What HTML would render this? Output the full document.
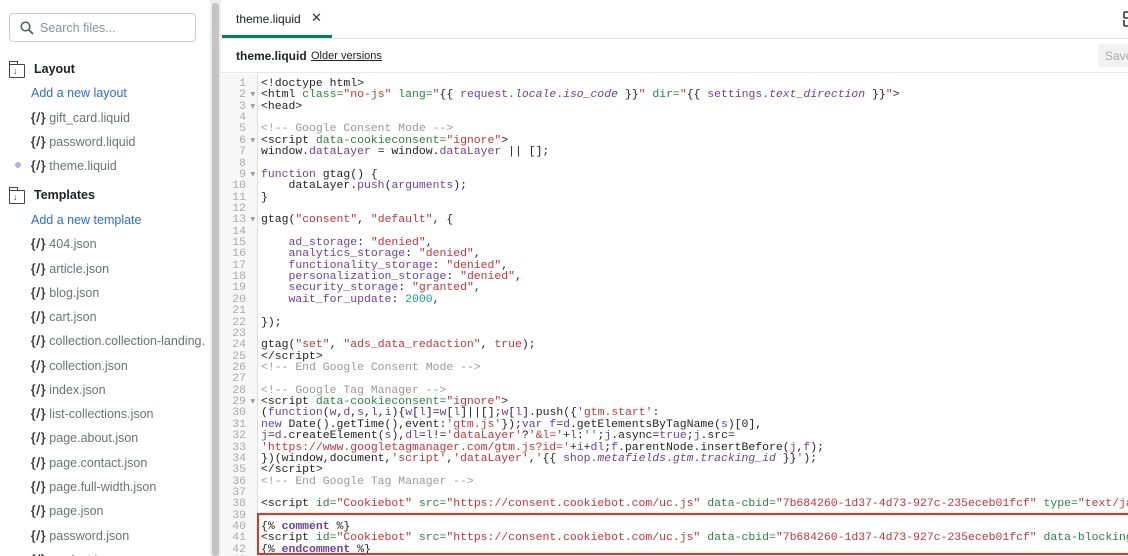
<!DOCTYPE html>
<html><head><meta charset="utf-8">
<style>
*{box-sizing:border-box;margin:0;padding:0}
html,body{width:1128px;height:556px;overflow:hidden}
body{background:#fff;font-family:"Liberation Sans",sans-serif;position:relative}
.side{position:absolute;left:0;top:0;width:210px;height:556px;background:#fff;overflow:hidden}
.search{position:absolute;left:9px;top:13px;width:187px;height:29px;border:1px solid #c9cccf;border-radius:4px}
.search span{position:absolute;left:30px;top:7px;font-size:12.5px;color:#8c9196}
.search svg{position:absolute;left:10px;top:7px}
.it{position:absolute;font-size:12.5px;color:#6d7175;left:31px;white-space:nowrap}
.it b{font-weight:normal;color:#333;font-size:13px;letter-spacing:1px;margin-right:3px;-webkit-text-stroke:0.4px #333}
.add{position:absolute;left:31px;font-size:12.5px;color:#2c6ecb}
.hd{position:absolute;left:34px;font-size:12.5px;font-weight:bold;color:#202223}
.fold{position:absolute;left:9px;width:16px;height:14px;border:1.5px solid #444;border-radius:1px}
.fold:before{content:"";position:absolute;left:-1.5px;top:-4px;width:7px;height:3px;border:1.5px solid #444;border-bottom:none}
.fold i{position:absolute;left:3px;top:1px;font-style:normal;font-size:9px;line-height:10px;color:#444}
.dot{position:absolute;left:15px;top:162px;width:6px;height:6px;border-radius:50%;background:#aeb4e6}
.track{position:absolute;left:210px;top:0;width:11px;height:556px;background:#ededed}
.thumb{position:absolute;left:212px;top:3px;width:7px;height:553px;background:#c4c4c4;border-radius:3px}
.main{position:absolute;left:221px;top:0;width:907px;height:556px;background:#fff;overflow:hidden}
.tab{position:absolute;left:15px;top:12px;font-size:12px;color:#202223}
.tabx{position:absolute;left:90px;top:10px;font-size:13px;color:#333}
.green{position:absolute;left:1px;top:35px;width:110px;height:3px;background:#008060}
.tline{position:absolute;left:0;top:38px;right:0;height:1px;background:#e1e3e5}
.ttl{position:absolute;left:15px;top:49px;font-size:12px;font-weight:bold;color:#202223}
.older{position:absolute;left:90px;top:50px;font-size:11px;color:#202223;text-decoration:underline}
.save{position:absolute;left:877px;top:44px;width:40px;height:23px;background:#f1f1f1;border-radius:3px;font-size:12px;color:#aaa;padding:5px 0 0 7px}
.hline{position:absolute;left:0;top:72px;right:0;height:1px;background:#e8e8e8}
.gut{position:absolute;left:1px;top:74px;width:36px;height:482px;background:#f7f7f7;border-right:1px solid #ddd}
.code{position:absolute;left:0;top:78px;font-family:"Liberation Mono",monospace;font-size:11.45px;color:#222;white-space:normal}
.code div{height:11.37px;line-height:11.37px;white-space:pre}
.ln{display:inline-block;width:25px;text-align:right;color:#aaa}
.ar{display:inline-block;width:15px;color:#999;text-align:left;padding-left:3px;transform:scale(0.7)}
.g{color:#2e7d46}.s{color:#c8323a}.p{color:#6b3fa0}.c{color:#999}.n{color:#1a9a9a}.i{font-style:italic}
.red{position:absolute;left:36px;top:513px;width:900px;height:42px;border:2.5px solid #e8321e;border-right:none}
</style></head><body>
<div class="side">
<div class="search"><svg width="14" height="14" viewBox="0 0 14 14"><circle cx="5.5" cy="5.5" r="4.3" fill="none" stroke="#5c5f62" stroke-width="1.6"/><line x1="8.7" y1="8.7" x2="13" y2="13" stroke="#5c5f62" stroke-width="1.8"/></svg><span>Search files...</span></div>
<div class="fold" style="top:64px"><i>↓</i></div><div class="hd" style="top:62px">Layout</div>
<div class="add" style="top:86px">Add a new layout</div>
<div class="it" style="top:110px"><b>{/}</b>gift_card.liquid</div>
<div class="it" style="top:134px"><b>{/}</b>password.liquid</div>
<div class="dot"></div>
<div class="it" style="top:158px"><b>{/}</b>theme.liquid</div>
<div class="fold" style="top:190px"><i>↓</i></div><div class="hd" style="top:188px">Templates</div>
<div class="add" style="top:213px">Add a new template</div>
<div class="it" style="top:236px"><b>{/}</b>404.json</div>
<div class="it" style="top:261px"><b>{/}</b>article.json</div>
<div class="it" style="top:285px"><b>{/}</b>blog.json</div>
<div class="it" style="top:309px"><b>{/}</b>cart.json</div>
<div class="it" style="top:333px"><b>{/}</b>collection.collection-landing.</div>
<div class="it" style="top:358px"><b>{/}</b>collection.json</div>
<div class="it" style="top:382px"><b>{/}</b>index.json</div>
<div class="it" style="top:406px"><b>{/}</b>list-collections.json</div>
<div class="it" style="top:430px"><b>{/}</b>page.about.json</div>
<div class="it" style="top:455px"><b>{/}</b>page.contact.json</div>
<div class="it" style="top:479px"><b>{/}</b>page.full-width.json</div>
<div class="it" style="top:503px"><b>{/}</b>page.json</div>
<div class="it" style="top:528px"><b>{/}</b>password.json</div>
<div class="it" style="top:552px"><b>{/}</b>product.json</div>
</div>
<div class="track"></div><div class="thumb"></div>
<div class="main">
<div class="tab">theme.liquid</div><div class="tabx">✕</div>
<svg style="position:absolute;left:902px;top:11px" width="10" height="16" viewBox="0 0 10 16"><path d="M1 1h9M1 1v6M1 7h9M1 9v6M1 15h9" stroke="#333" stroke-width="1.6" fill="none"/></svg>
<div class="green"></div><div class="tline"></div>
<div class="ttl">theme.liquid</div><div class="older">Older versions</div>
<div class="save">Save</div>
<div class="hline"></div>
<div class="gut"></div>
<div class="code"><div><span class="ln">1</span><span class="ar"> </span>&lt;!doctype html&gt;</div><div><span class="ln">2</span><span class="ar">▼</span>&lt;html <span class="g">class=</span><span class="s">"no-js"</span> <span class="g">lang=</span><span class="s">"</span>{{ <span class="p">request.<i>locale</i>.<i>iso_code</i></span> }}<span class="s">"</span> <span class="g">dir=</span><span class="s">"</span>{{ <span class="p">settings.<i>text_direction</i></span> }}<span class="s">"</span>&gt;</div><div><span class="ln">3</span><span class="ar">▼</span>&lt;head&gt;</div><div><span class="ln">4</span><span class="ar"> </span></div><div><span class="ln">5</span><span class="ar"> </span><span class="c">&lt;!-- Google Consent Mode --&gt;</span></div><div><span class="ln">6</span><span class="ar">▼</span>&lt;script <span class="g">data-cookieconsent=</span><span class="s">"ignore"</span>&gt;</div><div><span class="ln">7</span><span class="ar"> </span>window.<span class="p">dataLayer</span> = window.<span class="p">dataLayer</span> || [];</div><div><span class="ln">8</span><span class="ar"> </span></div><div><span class="ln">9</span><span class="ar">▼</span><span class="p">function</span> gtag() {</div><div><span class="ln">10</span><span class="ar"> </span>    dataLayer.<span class="p">push</span>(<span class="p">arguments</span>);</div><div><span class="ln">11</span><span class="ar"> </span>}</div><div><span class="ln">12</span><span class="ar"> </span></div><div><span class="ln">13</span><span class="ar">▼</span>gtag(<span class="s">"consent"</span>, <span class="s">"default"</span>, {</div><div><span class="ln">14</span><span class="ar"> </span></div><div><span class="ln">15</span><span class="ar"> </span>    <span class="p">ad_storage</span>: <span class="s">"denied"</span>,</div><div><span class="ln">16</span><span class="ar"> </span>    <span class="p">analytics_storage</span>: <span class="s">"denied"</span>,</div><div><span class="ln">17</span><span class="ar"> </span>    <span class="p">functionality_storage</span>: <span class="s">"denied"</span>,</div><div><span class="ln">18</span><span class="ar"> </span>    <span class="p">personalization_storage</span>: <span class="s">"denied"</span>,</div><div><span class="ln">19</span><span class="ar"> </span>    <span class="p">security_storage</span>: <span class="s">"granted"</span>,</div><div><span class="ln">20</span><span class="ar"> </span>    <span class="p">wait_for_update</span>: <span class="n">2000</span>,</div><div><span class="ln">21</span><span class="ar"> </span></div><div><span class="ln">22</span><span class="ar"> </span>});</div><div><span class="ln">23</span><span class="ar"> </span></div><div><span class="ln">24</span><span class="ar"> </span>gtag(<span class="s">"set"</span>, <span class="s">"ads_data_redaction"</span>, <span class="s">true</span>);</div><div><span class="ln">25</span><span class="ar"> </span>&lt;/script&gt;</div><div><span class="ln">26</span><span class="ar"> </span><span class="c">&lt;!-- End Google Consent Mode --&gt;</span></div><div><span class="ln">27</span><span class="ar"> </span></div><div><span class="ln">28</span><span class="ar"> </span><span class="c">&lt;!-- Google Tag Manager --&gt;</span></div><div><span class="ln">29</span><span class="ar">▼</span>&lt;script <span class="g">data-cookieconsent=</span><span class="s">"ignore"</span>&gt;</div><div><span class="ln">30</span><span class="ar"> </span>(<span class="p">function</span>(<span class="p">w</span>,<span class="p">d</span>,<span class="p">s</span>,<span class="p">l</span>,<span class="p">i</span>){<span class="p">w</span>[<span class="p">l</span>]=<span class="p">w</span>[<span class="p">l</span>]||[];<span class="p">w</span>[<span class="p">l</span>].push({<span class="s">'gtm.start'</span>:</div><div><span class="ln">31</span><span class="ar"> </span><span class="p">new</span> Date().getTime(),event:<span class="s">'gtm.js'</span>});<span class="p">var</span> <span class="p">f</span>=<span class="p">d</span>.getElementsByTagName(<span class="p">s</span>)[0],</div><div><span class="ln">32</span><span class="ar"> </span><span class="p">j</span>=<span class="p">d</span>.createElement(<span class="p">s</span>),<span class="p">dl</span>=<span class="p">l</span>!=<span class="s">'dataLayer'</span>?<span class="s">'&amp;l='</span>+<span class="p">l</span>:<span class="s">''</span>;<span class="p">j</span>.async=<span class="p">true</span>;<span class="p">j</span>.src=</div><div><span class="ln">33</span><span class="ar"> </span><span class="s">'https://www.googletagmanager.com/gtm.js?id='</span>+<span class="p">i</span>+<span class="p">dl</span>;<span class="p">f</span>.parentNode.insertBefore(<span class="p">j</span>,<span class="p">f</span>);</div><div><span class="ln">34</span><span class="ar"> </span>})(window,document,<span class="s">'script'</span>,<span class="s">'dataLayer'</span>,<span class="s">'</span>{{ <span class="p">shop.<i>metafields</i>.<i>gtm</i>.<i>tracking_id</i></span> }}<span class="s">'</span>);</div><div><span class="ln">35</span><span class="ar"> </span>&lt;/script&gt;</div><div><span class="ln">36</span><span class="ar"> </span><span class="c">&lt;!-- End Google Tag Manager --&gt;</span></div><div><span class="ln">37</span><span class="ar"> </span></div><div><span class="ln">38</span><span class="ar"> </span>&lt;script <span class="g">id=</span><span class="s">"Cookiebot"</span> <span class="g">src=</span><span class="s">"https://consent.cookiebot.com/uc.js"</span> <span class="g">data-cbid=</span><span class="s">"7b684260-1d37-4d73-927c-235eceb01fcf"</span> <span class="g">type=</span><span class="s">"text/javascript"</span></div><div><span class="ln">39</span><span class="ar"> </span></div><div><span class="ln">40</span><span class="ar"> </span>{% <b class="p">comment</b> %}</div><div><span class="ln">41</span><span class="ar"> </span>&lt;script <span class="g">id=</span><span class="s">"Cookiebot"</span> <span class="g">src=</span><span class="s">"https://consent.cookiebot.com/uc.js"</span> <span class="g">data-cbid=</span><span class="s">"7b684260-1d37-4d73-927c-235eceb01fcf"</span> <span class="g">data-blockingmode</span></div><div><span class="ln">42</span><span class="ar"> </span>{% <b class="p">endcomment</b> %}</div><div><span class="ln">43</span><span class="ar"> </span></div></div>
<div class="red"></div>
</div>
</body></html>
